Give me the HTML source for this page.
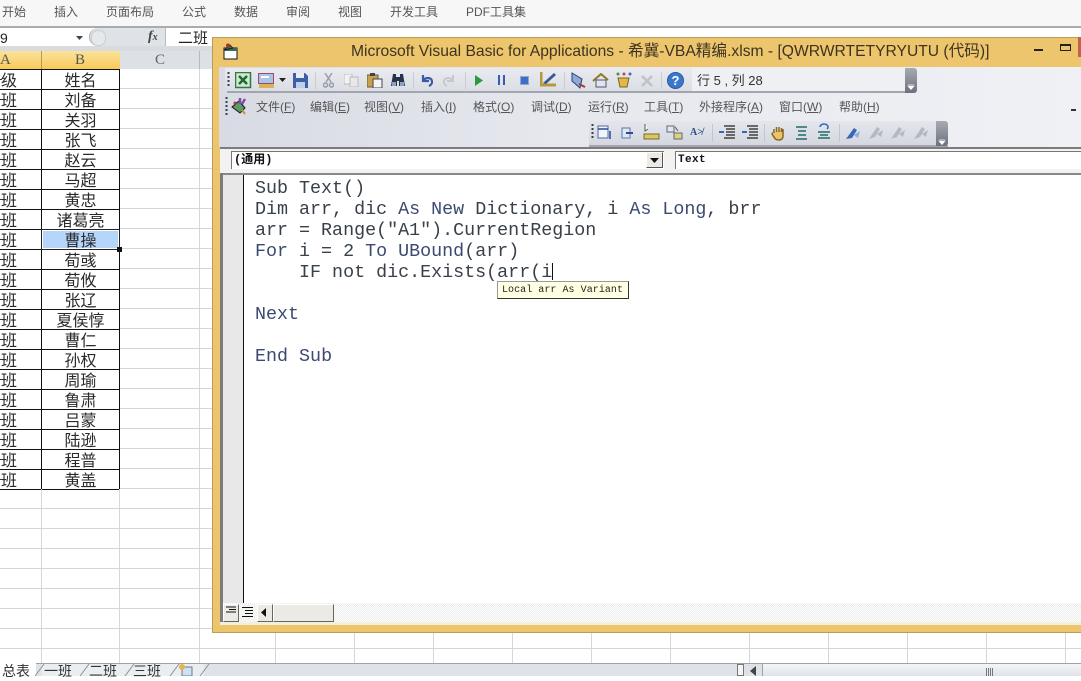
<!DOCTYPE html>
<html><head><meta charset="utf-8"><style>
html,body{margin:0;padding:0}
body{width:1081px;height:676px;position:relative;overflow:hidden;background:#fff;font-family:"Liberation Sans","Noto Sans CJK SC",sans-serif;color:#333}
div,span,svg{position:absolute}
.rb{font-size:12px;color:#555;top:4px;white-space:nowrap;line-height:16px}
.n{left:42px;width:77px;height:19px;border-bottom:1px solid #111;text-align:center;font:16px/18px "WenQuanYi Zen Hei","Noto Sans CJK SC",sans-serif;color:#2a2a2a}
.a{left:0;width:17px;height:19px;padding-right:24px;border-bottom:1px solid #111;font:16px/18px "WenQuanYi Zen Hei","Noto Sans CJK SC",sans-serif;color:#2a2a2a;white-space:nowrap;overflow:hidden;text-align:right}
.a::before{content:"";position:absolute;left:0;top:9px;width:2px;height:1px;background:#333}
.m{font:12px/16px "Liberation Sans","Noto Sans CJK SC",sans-serif;color:#555;top:99px;white-space:nowrap}
.c{left:255px;font:18.35px/21px "Liberation Mono","Noto Sans CJK SC",monospace;white-space:pre;color:#38404a;transform-origin:0 0}
.k{position:static;color:#3c4a72}
.tab{top:664px;font:14px/14px "WenQuanYi Zen Hei","Noto Sans CJK SC",sans-serif;color:#333;white-space:nowrap}
</style></head><body>
<div style="left:0;top:0;width:1081px;height:26px;background:#f7f7f7"></div>
<div style="left:0;top:26px;width:1081px;height:2px;background:#a9abae"></div>
<span class="rb" style="left:2px">开始</span><span class="rb" style="left:54px">插入</span><span class="rb" style="left:106px">页面布局</span><span class="rb" style="left:182px">公式</span><span class="rb" style="left:234px">数据</span><span class="rb" style="left:286px">审阅</span><span class="rb" style="left:338px">视图</span><span class="rb" style="left:390px">开发工具</span><span class="rb" style="left:466px">PDF工具集</span>

<div style="left:0;top:28px;width:1081px;height:19px;background:#fff"></div>
<div style="left:0;top:46px;width:1081px;height:5px;background:#d8dce1"></div>
<span style="left:0;top:29px;font:14px/18px 'Liberation Sans';color:#222">9</span>
<svg style="left:75px;top:35px" width="9" height="6"><path d="M1 1h7L4.500 5z" fill="#444"/></svg>
<div style="left:89px;top:28px;width:76px;height:18px;background:#dfe3e8;border-radius:9px 0 0 9px;border-left:1px solid #aaa"></div>
<div style="left:91px;top:30px;width:13px;height:14px;background:#e6e9ec;border-radius:7px;border:1px solid #ccc"></div>
<span style="left:148px;top:28px;font:italic bold 14px/18px 'Liberation Serif';color:#444">f<span style="position:static;font-size:10px">x</span></span>
<div style="left:165px;top:28px;width:1px;height:18px;background:#bbb"></div>
<span style="left:178px;top:28px;font:15px/19px 'WenQuanYi Zen Hei','Noto Sans CJK SC',sans-serif;color:#222">二班</span>

<!-- headers -->
<div style="left:0;top:51px;width:120px;height:18px;background:linear-gradient(#fbe29a,#f8cb5a)"></div>
<div style="left:120px;top:51px;width:92px;height:18px;background:#dde1e6"></div>
<div style="left:41px;top:51px;width:1px;height:18px;background:#b59a50"></div>
<div style="left:199px;top:51px;width:1px;height:18px;background:#b5bac0"></div>
<span style="left:0;top:52px;font:15px/17px 'Liberation Serif';color:#555">A</span>
<span style="left:75px;top:52px;font:15px/17px 'Liberation Serif';color:#555">B</span>
<span style="left:155px;top:52px;font:15px/17px 'Liberation Serif';color:#666">C</span>

<!-- grid -->
<svg style="left:0;top:69px" width="1081" height="594">
<path stroke="#d6d6d6" fill="none" d="M120 19.500H212M120 39.500H212M120 59.500H212M120 79.500H212M120 99.500H212M120 119.500H212M120 139.500H212M120 159.500H212M120 179.500H212M120 199.500H212M120 219.500H212M120 239.500H212M120 259.500H212M120 279.500H212M120 299.500H212M120 319.500H212M120 339.500H212M120 359.500H212M120 379.500H212M120 399.500H212M120 419.500H212M0 439.500H212M0 459.500H212M0 479.500H212M0 499.500H212M0 519.500H212M0 539.500H212M0 559.500H1081M0 579.500H1081M199.500 0V594M41.500 420V594M119.500 420V594M275.500 563V594M354.500 563V594M433.500 563V594M512.500 563V594M591.500 563V594M670.500 563V594M749.500 563V594M828.500 563V594M907.500 563V594M986.500 563V594M1065.500 563V594"/>
</svg>

<div style="left:119px;top:69px;width:1px;height:420px;background:#111"></div>
<div style="left:41px;top:69px;width:1px;height:420px;background:#111"></div>
<div style="left:0;top:69px;width:120px;height:1px;background:#111"></div>

<div class="a" style="top:70px">级</div><div class="n" style="top:70px">姓名</div>
<div class="a" style="top:90px">班</div><div class="n" style="top:90px">刘备</div>
<div class="a" style="top:110px">班</div><div class="n" style="top:110px">关羽</div>
<div class="a" style="top:130px">班</div><div class="n" style="top:130px">张飞</div>
<div class="a" style="top:150px">班</div><div class="n" style="top:150px">赵云</div>
<div class="a" style="top:170px">班</div><div class="n" style="top:170px">马超</div>
<div class="a" style="top:190px">班</div><div class="n" style="top:190px">黄忠</div>
<div class="a" style="top:210px">班</div><div class="n" style="top:210px">诸葛亮</div>
<div class="a" style="top:230px">班</div><div class="n" style="top:230px;background:#b5d5fb">曹操</div>
<div class="a" style="top:250px">班</div><div class="n" style="top:250px">荀彧</div>
<div class="a" style="top:270px">班</div><div class="n" style="top:270px">荀攸</div>
<div class="a" style="top:290px">班</div><div class="n" style="top:290px">张辽</div>
<div class="a" style="top:310px">班</div><div class="n" style="top:310px">夏侯惇</div>
<div class="a" style="top:330px">班</div><div class="n" style="top:330px">曹仁</div>
<div class="a" style="top:350px">班</div><div class="n" style="top:350px">孙权</div>
<div class="a" style="top:370px">班</div><div class="n" style="top:370px">周瑜</div>
<div class="a" style="top:390px">班</div><div class="n" style="top:390px">鲁肃</div>
<div class="a" style="top:410px">班</div><div class="n" style="top:410px">吕蒙</div>
<div class="a" style="top:430px">班</div><div class="n" style="top:430px">陆逊</div>
<div class="a" style="top:450px">班</div><div class="n" style="top:450px">程普</div>
<div class="a" style="top:470px">班</div><div class="n" style="top:470px">黄盖</div>
<div style="left:41px;top:229px;width:77px;height:19px;border:1px solid #222;box-shadow:inset 0 0 0 1px #fff"></div>
<div style="left:117px;top:247px;width:5px;height:5px;background:#111"></div>

<!-- bottom tabs -->
<div style="left:0;top:663px;width:1081px;height:13px;background:#dfe3e8;border-top:1px solid #9fa3a8;box-sizing:border-box"></div>
<div style="left:0;top:663px;width:36px;height:13px;background:#fff"></div>
<div style="left:42px;top:664px;width:162px;height:12px;background:#ebeef1"></div>
<svg style="left:0;top:663px" width="215" height="13"><path d="M35 13L44 1M80 13L89 1M125 13L134 1M170 13L179 1M200 13L209 1" stroke="#8e9296" fill="none"/></svg>
<span class="tab" style="left:2px">总表</span><span class="tab" style="left:44px">一班</span><span class="tab" style="left:89px">二班</span><span class="tab" style="left:133px">三班</span>
<svg style="left:178px;top:664px" width="16" height="12"><rect x="4" y="3" width="10" height="9" fill="#cfe0f2" stroke="#6a7c90"/><circle cx="4" cy="3" r="3" fill="#e9b24a"/></svg>
<div style="left:737px;top:664px;width:7px;height:12px;background:#f5f5f5;border:1px solid #777;box-sizing:border-box"></div>
<svg style="left:750px;top:666px" width="7" height="10"><path d="M6 0v10L0 5z" fill="#444"/></svg>
<div style="left:762px;top:664px;width:319px;height:12px;background:linear-gradient(#f4f6f8,#dfe3e8);border-left:1px solid #9fa3a8"></div>
<svg style="left:986px;top:668px" width="9" height="8"><path d="M.5 0v8M2.500 0v8M4.500 0v8M6.500 0v8" stroke="#777"/></svg>

<!-- VBA window -->
<div style="left:212px;top:37px;width:869px;height:596px;background:#ecc56d;border:1px solid #b89c5a;border-right:0;box-sizing:border-box"></div>
<svg style="left:221px;top:43px" width="18" height="18"><path d="M3 5h13v11H3z" fill="#fff" stroke="#111"/><path d="M3 5h13v3H3z" fill="#3e6a56"/><path d="M3 7L9 2l3 3z" fill="#3c6a42" stroke="#111" stroke-width=".7"/><circle cx="7" cy="2.500" r="2" fill="#a5342c"/></svg>
<span style="left:351px;top:42px;font:15.65px/20px 'Liberation Sans','Noto Sans CJK SC',sans-serif;color:#3c3420;white-space:nowrap">Microsoft Visual Basic for Applications - 希冀-VBA精编.xlsm - [QWRWRTETYRYUTU (代码)]</span>
<div style="left:1034px;top:49px;width:9px;height:2px;background:#222"></div>
<div style="left:1060px;top:44px;width:11px;height:7px;border:1px solid #222;border-top-width:2px;box-sizing:border-box"></div>
<div style="left:1078px;top:37px;width:3px;height:20px;background:#c5604a"></div>

<div style="left:219px;top:67px;width:862px;height:80px;background:linear-gradient(90deg,#d8dbe3,#e6e8ee 40%,#f0f1f5)"></div>
<div style="left:1071px;top:109px;width:5px;height:2px;background:#333"></div>
<!-- toolbar 1 -->
<div style="left:225px;top:68px;width:680px;height:24px;background:linear-gradient(#e9ebf0,#dadde4)"></div>
<div style="left:692px;top:68px;width:213px;height:24px;background:#eff0f3"></div>
<div style="left:227px;top:91px;width:680px;height:2px;background:#a2a5ae"></div>
<div style="left:905px;top:68px;width:12px;height:25px;background:linear-gradient(#a6aab4,#6d717c);border-radius:0 3px 3px 0"></div>
<svg style="left:907px;top:84px" width="8" height="6"><path d="M1 0h6M1 2h6L4 5.500z" stroke="#fff" fill="#fff" stroke-width=".7"/></svg>
<svg style="left:227px;top:72px" width="3" height="16"><path d="M1.500 0v16" stroke="#3a3f4c" stroke-width="2" stroke-dasharray="2 2"/></svg>
<svg style="left:235px;top:72px" width="17" height="17"><rect x=".5" y=".5" width="15" height="15" fill="#cfe8cf" stroke="#2f7a42" stroke-width="1.500"/><path d="M4 4l8 8M12 4l-8 8" stroke="#1e6a35" stroke-width="2.500"/></svg>
<svg style="left:258px;top:72px" width="17" height="17"><rect x=".5" y="1.500" width="15" height="10" fill="#a9c4e8" stroke="#a04a6a"/><rect x="3" y="4" width="8" height="2" fill="#fff"/><rect x="1" y="12" width="15" height="4" fill="#d9b45a"/></svg>
<svg style="left:279px;top:78px" width="7" height="4"><path d="M0 0h7L3.500 4z" fill="#222"/></svg>
<svg style="left:293px;top:73px" width="15" height="15"><path d="M0 0h12l3 3v12H0z" fill="#3c5fa8"/><rect x="3" y="0" width="8" height="5" fill="#e8ecf4"/><rect x="3" y="9" width="9" height="6" fill="#bcd0ee"/></svg>
<div style="left:315px;top:72px;width:1px;height:17px;background:#c9ccd2"></div>
<svg style="left:323px;top:73px" width="11" height="15"><path d="M2 0l6 9M9 0L3 9" stroke="#9a9da3" stroke-width="1.500"/><circle cx="2.500" cy="12" r="2" fill="none" stroke="#9a9da3" stroke-width="1.500"/><circle cx="8.500" cy="12" r="2" fill="none" stroke="#9a9da3" stroke-width="1.500"/></svg>
<svg style="left:344px;top:74px" width="15" height="13"><rect x="0" y="0" width="8" height="10" fill="#f2f2f2" stroke="#bbb"/><rect x="6" y="3" width="8" height="10" fill="#e8e8ea" stroke="#bbb"/></svg>
<svg style="left:367px;top:73px" width="16" height="15"><rect x="0" y="2" width="11" height="12" fill="#c9a24e" stroke="#6a5a30"/><rect x="6" y="6" width="9" height="9" fill="#f4f4f4" stroke="#444"/><rect x="3" y="0" width="5" height="3" fill="#444"/></svg>
<svg style="left:390px;top:73px" width="16" height="14"><path d="M3 1h3v3h4V1h3l2 12H9V8H7v5H1z" fill="#28324a"/><rect x="2" y="9" width="4" height="4" fill="#8da0c4"/><rect x="10" y="9" width="4" height="4" fill="#8da0c4"/></svg>
<div style="left:413px;top:72px;width:1px;height:17px;background:#c9ccd2"></div>
<svg style="left:420px;top:74px" width="13" height="13"><path d="M3 1v6h6M3 7C5 3 11 3 12 7c.5 2-1 4-3 5" fill="none" stroke="#3a5ca8" stroke-width="2.200"/></svg>
<svg style="left:443px;top:74px" width="13" height="13"><path d="M10 1v6H4M10 7C8 3 2 3 1 7c-.5 2 1 4 3 5" fill="none" stroke="#c5c9cc" stroke-width="2"/></svg>
<div style="left:465px;top:72px;width:1px;height:17px;background:#c9ccd2"></div>
<svg style="left:475px;top:75px" width="8" height="11"><path d="M0 0l8 5.500L0 11z" fill="#2a9a40"/></svg>
<svg style="left:497px;top:75px" width="9" height="11"><path d="M1 0h2v10H1zM6 0h2v10H6z" fill="#3a5ca8"/></svg>
<div style="left:520px;top:76px;width:9px;height:9px;background:#3f6ec4;border:1px solid #8ea6d8;box-sizing:border-box"></div>
<svg style="left:540px;top:71px" width="17" height="17"><path d="M1 1v13h15" fill="none" stroke="#b79a35" stroke-width="3"/><path d="M3 12L14 2l2 2L6 13z" fill="#345a9c"/></svg>
<div style="left:564px;top:72px;width:1px;height:17px;background:#c9ccd2"></div>
<svg style="left:570px;top:72px" width="16" height="17"><path d="M2 1l10 6-2 9-8-7z" fill="#8ea9d8" stroke="#2a3f76"/><path d="M9 12l6 3" stroke="#a33" stroke-width="2"/></svg>
<svg style="left:592px;top:73px" width="17" height="15"><path d="M1 8L9 1l7 6" fill="none" stroke="#8c7a2a" stroke-width="2"/><rect x="4" y="7" width="10" height="7" fill="#dfe6f2" stroke="#556"/></svg>
<svg style="left:615px;top:72px" width="17" height="16"><path d="M3 6h11l-2 9H5z" fill="#e2b948" stroke="#7a6525"/><circle cx="3" cy="2" r="1.500" fill="#3a9a40"/><circle cx="9" cy="2" r="1.500" fill="#c44"/><circle cx="15" cy="2" r="1.500" fill="#46c"/></svg>
<svg style="left:640px;top:74px" width="14" height="14"><path d="M2 12L12 2M2 2l10 10" stroke="#bfc2c6" stroke-width="2.500"/></svg>
<div style="left:661px;top:72px;width:1px;height:17px;background:#c9ccd2"></div>
<div style="left:667px;top:72px;width:17px;height:17px;border-radius:50%;background:#3a78cc;border:1px solid #2a5a9c;box-sizing:border-box;color:#fff;font:bold 13px/15px 'Liberation Sans';text-align:center">?</div>
<span style="left:697px;top:72px;font:13px/17px 'Liberation Sans','Noto Sans CJK SC',sans-serif;color:#333;white-space:pre">行 5 , 列 28</span>

<!-- menu -->
<svg style="left:225px;top:97px" width="3" height="18"><path d="M1.500 0v18" stroke="#3a3f4c" stroke-width="2" stroke-dasharray="2 2"/></svg>
<svg style="left:230px;top:97px" width="18" height="18"><path d="M2 10L9 4l6 7-5 5z" fill="#55a060" stroke="#303"/><path d="M10 1v6M15 2l-3 5" stroke="#7a4ea0" stroke-width="2.500"/><circle cx="5" cy="6" r="1.500" fill="#c33"/><path d="M12 13l3 4" stroke="#b49a2a" stroke-width="2"/></svg>
<span class="m" style="left:256px">文件(<u>F</u>)</span><span class="m" style="left:310px">编辑(<u>E</u>)</span><span class="m" style="left:364px">视图(<u>V</u>)</span><span class="m" style="left:421px">插入(<u>I</u>)</span><span class="m" style="left:473px">格式(<u>O</u>)</span><span class="m" style="left:531px">调试(<u>D</u>)</span><span class="m" style="left:588px">运行(<u>R</u>)</span><span class="m" style="left:644px">工具(<u>T</u>)</span><span class="m" style="left:699px">外接程序(<u>A</u>)</span><span class="m" style="left:779px">窗口(<u>W</u>)</span><span class="m" style="left:839px">帮助(<u>H</u>)</span>

<!-- toolbar 2 -->
<div style="left:589px;top:121px;width:347px;height:25px;background:linear-gradient(#e4e6ec,#d4d7df)"></div>
<div style="left:589px;top:145px;width:359px;height:2px;background:#a2a5ae"></div>
<div style="left:936px;top:121px;width:12px;height:25px;background:linear-gradient(#a6aab4,#6d717c);border-radius:0 3px 3px 0"></div>
<svg style="left:938px;top:139px" width="8" height="6"><path d="M1 0h6M1 2h6L4 5.500z" stroke="#fff" fill="#fff" stroke-width=".7"/></svg>
<svg style="left:591px;top:124px" width="3" height="16"><path d="M1.500 0v16" stroke="#3a3f4c" stroke-width="2" stroke-dasharray="2 2"/></svg>
<svg style="left:597px;top:125px" width="16" height="15"><rect x="1" y="1" width="10" height="12" fill="#f2f4f8" stroke="#4a6aa8"/><path d="M1 4h10M13 6v8" stroke="#2a4a9c" stroke-width="1.500"/></svg>
<svg style="left:621px;top:127px" width="13" height="12"><rect x="1" y="1" width="8" height="10" fill="#dfe6f4" stroke="#5a78b0"/><path d="M5 6h7" stroke="#2a4a9c" stroke-width="2"/></svg>
<svg style="left:643px;top:124px" width="17" height="16"><path d="M2 0v7l3-2" fill="#fff" stroke="#555"/><rect x="1" y="10" width="15" height="5" fill="#dcc660" stroke="#776a2a"/></svg>
<svg style="left:666px;top:124px" width="17" height="16"><rect x="1" y="2" width="7" height="6" fill="#dfe6f4" stroke="#667"/><rect x="8" y="9" width="8" height="6" fill="#dcd27a" stroke="#667"/><path d="M9 3l3 4" stroke="#555"/></svg>
<span style="left:690px;top:126px;font:bold 10px/13px 'Liberation Serif';color:#2a4a80">A≯</span>
<div style="left:712px;top:124px;width:1px;height:18px;background:#c3c6cd"></div>
<svg style="left:719px;top:125px" width="16" height="15"><path d="M5 1h11M7 4h9M7 7h9M7 10h9M5 13h11" stroke="#222" stroke-width="1.300"/><path d="M0 7h5" stroke="#2a6ac4" stroke-width="2"/></svg>
<svg style="left:742px;top:125px" width="16" height="15"><path d="M5 1h11M7 4h9M7 7h9M7 10h9M5 13h11" stroke="#222" stroke-width="1.300"/><path d="M0 7h5" stroke="#2a6ac4" stroke-width="2"/></svg>
<div style="left:764px;top:124px;width:1px;height:18px;background:#c3c6cd"></div>
<svg style="left:771px;top:125px" width="14" height="16"><path d="M3 8V4M5.500 7V2M8 7V2M10.500 7V3M2 8c-2 0 0 3 1 4 1 2 2 3 5 3s4-2 4-4V4" stroke="#8a6420" stroke-width="1.500" fill="#e9c46a"/></svg>
<svg style="left:795px;top:126px" width="13" height="14"><path d="M1 1h11M3 5h8M3 9h8M1 13h11" stroke="#226a6a" stroke-width="1.400"/></svg>
<svg style="left:817px;top:123px" width="15" height="17"><path d="M3 4a4 3 0 1 1 7 2" fill="none" stroke="#2a6ac4" stroke-width="1.500"/><path d="M1 9h12M3 12h8M1 15h12" stroke="#226a6a" stroke-width="1.400"/></svg>
<div style="left:839px;top:124px;width:1px;height:18px;background:#c3c6cd"></div>
<svg style="left:845px;top:126px" width="16" height="14"><path d="M1 13L9 2l3 2-5 8z" fill="#3a68b8"/><path d="M9 9l6-4-2 7z" fill="#8ab0e0"/></svg>
<svg style="left:868px;top:125px" width="16" height="15"><path d="M1 14L9 2l3 2-5 8zM9 9l6-4-2 7z" fill="#b5b8bd"/></svg>
<svg style="left:890px;top:125px" width="16" height="15"><path d="M1 14L9 2l3 2-5 8zM9 9l6-4-2 7z" fill="#b5b8bd"/></svg>
<svg style="left:913px;top:125px" width="16" height="15"><path d="M1 14L9 2l3 2-5 8zM9 9l6-4-2 7z" fill="#b5b8bd"/></svg>

<!-- object / proc combo -->
<div style="left:220px;top:147px;width:861px;height:27px;background:#f2f2f2;border-top:2px solid #7c7c7c;box-sizing:border-box"></div>
<div style="left:231px;top:151px;width:433px;height:18px;background:#fff;border-left:1px solid #777;border-top:1px solid #777;box-sizing:border-box"></div>
<span style="left:234px;top:152px;font:bold 12px/16px 'Liberation Mono','Noto Sans CJK SC',monospace;color:#111">(通用)</span>
<div style="left:646px;top:152px;width:17px;height:16px;background:#eceae4;border:1px solid;border-color:#fff #555 #555 #fff;box-sizing:border-box"></div>
<svg style="left:650px;top:158px" width="9" height="5"><path d="M0 0h9L4.500 5z" fill="#111"/></svg>
<div style="left:675px;top:151px;width:406px;height:18px;background:#fff;border-left:1px solid #777;border-top:1px solid #777;box-sizing:border-box"></div>
<span style="left:678px;top:153px;font:bold 11px/14px 'Liberation Mono';color:#111;letter-spacing:.4px">Text</span>

<!-- code pane -->
<div style="left:220px;top:173px;width:861px;height:452px;background:#fff;border-top:2px solid #888;box-sizing:border-box"></div>
<div style="left:220px;top:173px;width:3px;height:452px;background:#7c7c7c"></div>
<div style="left:223px;top:175px;width:21px;height:430px;background:#e8e8e8"></div>
<div style="left:243px;top:175px;width:1px;height:430px;background:#111"></div>
<div style="left:223px;top:603px;width:858px;height:19px;background:repeating-conic-gradient(#ececec 0 25%,#fff 0 50%) 0 0/2px 2px"></div>
<div style="left:220px;top:622px;width:861px;height:3px;background:#f4efdc"></div>
<div style="left:223px;top:604px;width:16px;height:18px;background:#eceae4;border:1px solid;border-color:#fff #666 #666 #fff;box-sizing:border-box"></div>
<svg style="left:226px;top:606px" width="11" height="7"><path d="M0 1h10M3 3.500h7M0 6h10" stroke="#111"/></svg>
<div style="left:240px;top:604px;width:16px;height:18px;background:#f4f4f2"></div>
<svg style="left:242px;top:607px" width="12" height="11"><path d="M0 .500h11M3 3.500h8M3 6.500h8M0 9.500h11" stroke="#111"/></svg>
<div style="left:257px;top:604px;width:16px;height:18px;background:#eceae4;border:1px solid;border-color:#fff #666 #666 #fff;box-sizing:border-box"></div>
<svg style="left:261px;top:608px" width="6" height="9"><path d="M5 0v9L0 4.500z" fill="#111"/></svg>
<div style="left:273px;top:604px;width:61px;height:18px;background:#eceae4;border:1px solid;border-color:#fff #666 #666 #fff;box-sizing:border-box"></div>

<div class="c" style="top:178px">Sub Text()</div>
<div class="c" style="top:199px">Dim arr, dic <span class="k">As</span> <span class="k">New</span> Dictionary, i <span class="k">As</span> <span class="k">Long</span>, brr</div>
<div class="c" style="top:220px">arr = Range("A1").CurrentRegion</div>
<div class="c" style="top:241px"><span class="k">For</span> i = 2 <span class="k">To</span> <span class="k">UBound</span>(arr)</div>
<div class="c" style="top:262px">    IF not dic.Exists(arr(i</div>
<div style="left:552px;top:263px;width:1px;height:17px;background:#111"></div>
<div class="c" style="top:304px"><span class="k">Next</span></div>
<div class="c" style="top:346px"><span class="k">End</span> <span class="k">Sub</span></div>

<div style="left:497px;top:281px;width:132px;height:18px;background:#ffffe1;border:1px solid #333;border-top-color:#999;border-left-color:#999;box-sizing:border-box"></div>
<span style="left:502px;top:284px;font:10px/14px 'Liberation Mono';color:#222;white-space:pre;letter-spacing:.05px">Local arr As Variant</span>
</body></html>
